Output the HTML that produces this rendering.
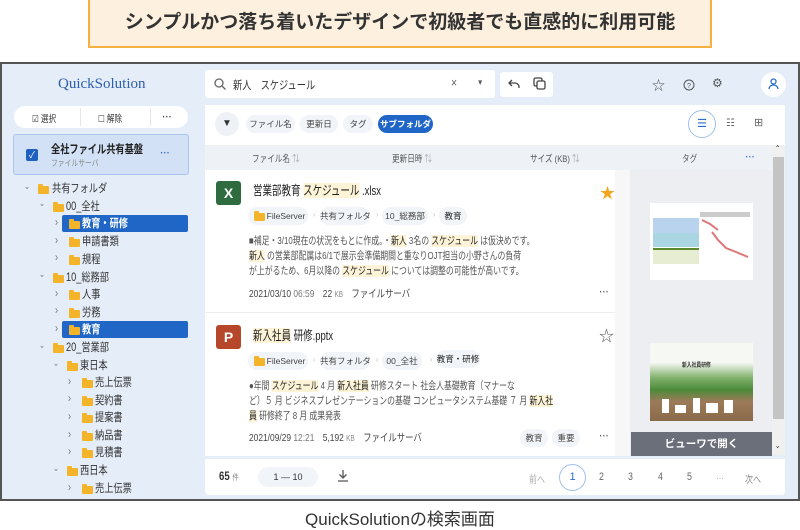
<!DOCTYPE html>
<html><head><meta charset="utf-8"><style>
*{box-sizing:border-box;margin:0;padding:0}
body{width:800px;height:526px;background:#fff;position:relative;overflow:hidden;font-family:"Liberation Sans","Noto Sans CJK JP",sans-serif;color:#333}
.a{position:absolute}
.banner{left:88px;top:0;width:624px;height:48px;background:#fdf0df;border:2px solid #f5b042;border-top:none;text-align:center;font-size:19px;font-weight:bold;line-height:46px;color:#333}
.frame{left:0;top:62px;width:800px;height:439px;border:2px solid #555;background:#e5edf8;overflow:hidden}
.t{position:absolute;white-space:nowrap;transform:scaleX(.8);transform-origin:left center}
.fold{position:absolute;width:11px;height:8px;background:#f4b42a;border-radius:1px}
.fold:before{content:"";position:absolute;left:0;top:-2px;width:5px;height:3px;background:#f4b42a;border-radius:1px 1px 0 0}
.chip{position:absolute;height:18px;border-radius:9px;background:#f1f4f8;font-size:8.5px;line-height:18px;text-align:center;color:#444;white-space:nowrap;overflow:hidden}
.hl{background:#fdf3d6;color:#222}
.snip{position:absolute;font-size:10.5px;line-height:15px;color:#555;white-space:nowrap;transform:scaleX(.75);transform-origin:left center}
.ico{position:absolute;width:25px;height:24px;border-radius:3px;color:#fff;font-weight:bold;font-size:14px;text-align:center;line-height:24px}
.tr{font-size:11.5px;color:#333}
</style></head><body>
<div class="a banner">シンプルかつ落ち着いたデザインで初級者でも直感的に利用可能</div>
<div class="a frame">
<div class="t" style="left:56px;top:12px;font-family:'Liberation Serif',serif;font-size:15px;color:#2d5fae;transform:none">QuickSolution</div>
<div class="a" style="left:12px;top:42px;width:174px;height:22px;background:#fff;border-radius:11px;font-size:9.5px">
 <span class="t" style="left:18px;top:5px">☑ 選択</span><span class="t" style="left:84px;top:5px">☐ 解除</span><span class="t" style="left:148px;top:2px;font-size:12px">⋯</span>
 <div class="a" style="left:66px;top:2px;width:1px;height:18px;background:#e6e6e6"></div><div class="a" style="left:136px;top:2px;width:1px;height:18px;background:#e6e6e6"></div>
</div>
<div class="a" style="left:11px;top:70px;width:176px;height:41px;background:#d2e1f5;border:1px solid #a9c6ea;border-radius:3px">
 <div class="a" style="left:12px;top:14px;width:12px;height:12px;background:#1f5fbf;border-radius:2px;color:#fff;font-size:9px;line-height:12px;text-align:center">✓</div>
 <div class="t" style="left:37px;top:6px;font-size:11.5px;font-weight:bold;color:#222">全社ファイル共有基盤</div>
 <div class="t" style="left:37px;top:22px;font-size:8.5px;color:#888">ファイルサーバ</div>
 <div class="t" style="left:146px;top:9px;font-size:12px;color:#1f5fbf">⋯</div>
</div>
<div class="a" style="left:60px;top:151px;width:126px;height:17px;background:#1f66c6;border-radius:2px"></div>
<div class="a" style="left:60px;top:257px;width:126px;height:17px;background:#1f66c6;border-radius:2px"></div>
<div class="tr">
<span class="t" style="left:22px;top:117px;font-size:9px;color:#777">⌄</span><div class="fold" style="left:36px;top:122px"></div><span class="t" style="left:50px;top:116px">共有フォルダ</span>
<span class="t" style="left:37px;top:134px;font-size:9px;color:#777">⌄</span><div class="fold" style="left:51px;top:140px"></div><span class="t" style="left:64px;top:134px">00_全社</span>
<span class="t" style="left:53px;top:153px;color:#777">›</span><div class="fold" style="left:67px;top:157px"></div><span class="t" style="left:80px;top:151px;color:#fff;font-weight:bold">教育・研修</span>
<span class="t" style="left:53px;top:171px;color:#777">›</span><div class="fold" style="left:67px;top:175px"></div><span class="t" style="left:80px;top:169px">申請書類</span>
<span class="t" style="left:53px;top:188px;color:#777">›</span><div class="fold" style="left:67px;top:193px"></div><span class="t" style="left:80px;top:187px">規程</span>
<span class="t" style="left:37px;top:205px;font-size:9px;color:#777">⌄</span><div class="fold" style="left:51px;top:211px"></div><span class="t" style="left:64px;top:205px">10_総務部</span>
<span class="t" style="left:53px;top:224px;color:#777">›</span><div class="fold" style="left:67px;top:228px"></div><span class="t" style="left:80px;top:222px">人事</span>
<span class="t" style="left:53px;top:241px;color:#777">›</span><div class="fold" style="left:67px;top:246px"></div><span class="t" style="left:80px;top:240px">労務</span>
<span class="t" style="left:53px;top:259px;color:#777">›</span><div class="fold" style="left:67px;top:263px"></div><span class="t" style="left:80px;top:257px;color:#fff;font-weight:bold">教育</span>
<span class="t" style="left:37px;top:276px;font-size:9px;color:#777">⌄</span><div class="fold" style="left:51px;top:281px"></div><span class="t" style="left:64px;top:275px">20_営業部</span>
<span class="t" style="left:51px;top:294px;font-size:9px;color:#777">⌄</span><div class="fold" style="left:65px;top:299px"></div><span class="t" style="left:78px;top:293px">東日本</span>
<span class="t" style="left:66px;top:312px;color:#777">›</span><div class="fold" style="left:80px;top:316px"></div><span class="t" style="left:93px;top:310px">売上伝票</span>
<span class="t" style="left:66px;top:329px;color:#777">›</span><div class="fold" style="left:80px;top:334px"></div><span class="t" style="left:93px;top:328px">契約書</span>
<span class="t" style="left:66px;top:347px;color:#777">›</span><div class="fold" style="left:80px;top:351px"></div><span class="t" style="left:93px;top:345px">提案書</span>
<span class="t" style="left:66px;top:365px;color:#777">›</span><div class="fold" style="left:80px;top:369px"></div><span class="t" style="left:93px;top:363px">納品書</span>
<span class="t" style="left:66px;top:382px;color:#777">›</span><div class="fold" style="left:80px;top:386px"></div><span class="t" style="left:93px;top:380px">見積書</span>
<span class="t" style="left:51px;top:399px;font-size:9px;color:#777">⌄</span><div class="fold" style="left:65px;top:404px"></div><span class="t" style="left:78px;top:398px">西日本</span>
<span class="t" style="left:66px;top:418px;color:#777">›</span><div class="fold" style="left:80px;top:422px"></div><span class="t" style="left:93px;top:416px">売上伝票</span>
</div>

<div class="a" style="left:203px;top:6px;width:290px;height:28px;background:#fff;border-radius:3px">
 <svg class="a" style="left:9px;top:8px" width="12" height="12"><circle cx="5" cy="5" r="4" fill="none" stroke="#666" stroke-width="1.3"/><path d="M8 8l3.5 3.5" stroke="#666" stroke-width="1.3"/></svg>
 <span class="t" style="left:28px;top:7px;font-size:11.5px;color:#333">新人　スケジュール</span>
 <span class="t" style="left:246px;top:5px;font-size:13px;color:#666">×</span>
 <span class="t" style="left:272px;top:8px;font-size:8px;color:#555">▼</span>
</div>
<div class="a" style="left:498px;top:8px;width:53px;height:25px;background:#fff;border-radius:3px">
 <svg class="a" style="left:8px;top:6px" width="13" height="12"><path d="M4 2L1 5l3 3M1 5h6a4 4 0 0 1 4 4v1" fill="none" stroke="#444" stroke-width="1.3"/></svg>
 <svg class="a" style="left:33px;top:5px" width="13" height="13"><rect x="1" y="1" width="8" height="8" rx="1.5" fill="none" stroke="#444" stroke-width="1.3"/><rect x="4" y="4" width="8" height="8" rx="1.5" fill="#fff" stroke="#444" stroke-width="1.3"/></svg>
</div>
<span class="t" style="left:650px;top:11px;font-size:13px;color:#555;transform:none">☆</span>
<svg class="a" style="left:681px;top:15px" width="12" height="12"><circle cx="6" cy="6" r="5" fill="none" stroke="#555"/><text x="6" y="9" font-size="7" text-anchor="middle" fill="#555">?</text></svg>
<span class="t" style="left:710px;top:12px;font-size:12px;color:#555;transform:none">⚙</span>
<div class="a" style="left:759px;top:8px;width:25px;height:25px;border-radius:50%;background:#fff"><svg class="a" style="left:7px;top:6px" width="11" height="12"><circle cx="5.5" cy="3.5" r="2.5" fill="none" stroke="#2a6fd0" stroke-width="1.3"/><path d="M1 11a4.5 4 0 0 1 9 0" fill="none" stroke="#2a6fd0" stroke-width="1.3"/></svg></div>

<div class="a" style="left:203px;top:41px;width:580px;height:40px;background:#fff"></div>
<div class="a" style="left:213px;top:48px;width:24px;height:24px;border-radius:50%;background:#eef2f7;font-size:10px;text-align:center;line-height:24px">▼</div>
<div class="chip" style="left:244px;top:51px;width:49px">ファイル名</div>
<div class="chip" style="left:298px;top:51px;width:38px">更新日</div>
<div class="chip" style="left:341px;top:51px;width:30px">タグ</div>
<div class="chip" style="left:376px;top:51px;width:55px;background:#1f66c6;color:#fff;font-weight:bold">サブフォルダ</div>
<div class="a" style="left:686px;top:46px;width:28px;height:28px;border-radius:50%;border:1px solid #9fc0ea;color:#2a6fd0;font-size:11px;text-align:center;line-height:26px">☰</div>
<span class="t" style="left:724px;top:54px;font-size:10px;color:#666;transform:none">☷</span>
<span class="t" style="left:752px;top:52px;font-size:11px;color:#666;transform:none">⊞</span>

<div class="a" style="left:203px;top:81px;width:568px;height:25px;background:#eef2f7;font-size:9.5px;color:#555">
 <span class="t" style="left:47px;top:6px">ファイル名 <span style="color:#aaa">⇅</span></span>
 <span class="t" style="left:187px;top:6px">更新日時 <span style="color:#aaa">⇅</span></span>
 <span class="t" style="left:325px;top:6px">サイズ (KB) <span style="color:#aaa">⇅</span></span>
 <span class="t" style="left:477px;top:6px">タグ</span>
 <span class="t" style="left:540px;top:3px;color:#2a6fd0;font-size:12px">⋯</span>
</div>
<div class="a" style="left:770px;top:81px;width:13px;height:310px;background:#f0f0f0"><div class="a" style="left:1px;top:12px;width:11px;height:262px;background:#c4c4c4"></div><span class="t" style="left:3px;top:-1px;font-size:8px">⌃</span><span class="t" style="left:3px;top:296px;font-size:8px">⌄</span></div>

<div class="a" style="left:203px;top:106px;width:410px;height:286px;background:#fff"></div>
<div class="a" style="left:203px;top:248px;width:410px;height:1px;background:#eee"></div>
<div class="a" style="left:613px;top:106px;width:157px;height:286px;background:#f7f7f8"></div>
<div class="a" style="left:628px;top:106px;width:142px;height:286px;background:#edeef1"></div>

<div class="ico" style="left:214px;top:117px;background:#2e6c3f">X</div>
<div class="t" style="left:251px;top:116px;font-size:13px;color:#222;transform:scaleX(.73)">営業部教育 <span class="hl">スケジュール</span> .xlsx</div>
<span class="t" style="left:598px;top:118px;font-size:15px;color:#f2a51d;transform:none">★</span>
<div class="chip" style="left:246px;top:143px;width:60px;padding-left:16px">FileServer</div><div class="fold" style="left:252px;top:149px"></div>
<span class="t" style="left:311px;top:146px;font-size:8px;color:#bbb">›</span>
<div class="chip" style="left:318px;top:143px;width:50px">共有フォルダ</div>
<span class="t" style="left:374px;top:146px;font-size:8px;color:#bbb">›</span>
<div class="chip" style="left:380px;top:143px;width:46px">10_総務部</div>
<span class="t" style="left:431px;top:146px;font-size:8px;color:#bbb">›</span>
<div class="chip" style="left:437px;top:143px;width:28px;color:#222">教育</div>
<div class="snip" style="left:247px;top:170px">■補足・3/10現在の状況をもとに作成。・<span class="hl">新人</span> 3名の <span class="hl">スケジュール</span> は仮決めです。</div>
<div class="snip" style="left:247px;top:185px"><span class="hl">新人</span> の営業部配属は6/1で展示会準備期間と重なりOJT担当の小野さんの負荷</div>
<div class="snip" style="left:247px;top:200px">が上がるため、6月以降の <span class="hl">スケジュール</span> については調整の可能性が高いです。</div>
<div class="t" style="left:247px;top:222px;font-size:10.5px;color:#444">2021/03/10 <span style="color:#777">06:59</span>　22 <span style="font-size:8px;color:#888">KB</span>　ファイルサーバ</div>
<span class="t" style="left:597px;top:219px;font-size:12px;color:#555">⋯</span>

<div class="ico" style="left:214px;top:261px;background:#b7472a">P</div>
<div class="t" style="left:251px;top:261px;font-size:13px;color:#222;transform:scaleX(.73)"><span class="hl">新入社員</span> 研修.pptx</div>
<span class="t" style="left:597px;top:261px;font-size:15px;color:#555;transform:none">☆</span>
<div class="chip" style="left:246px;top:288px;width:60px;padding-left:16px">FileServer</div><div class="fold" style="left:252px;top:294px"></div>
<span class="t" style="left:311px;top:291px;font-size:8px;color:#bbb">›</span>
<div class="chip" style="left:318px;top:288px;width:50px">共有フォルダ</div>
<span class="t" style="left:374px;top:291px;font-size:8px;color:#bbb">›</span>
<div class="chip" style="left:380px;top:288px;width:40px">00_全社</div>
<span class="t" style="left:428px;top:291px;font-size:8px;color:#bbb">›</span>
<div class="chip" style="left:434px;top:286px;width:44px;color:#222">教育・研修</div>
<div class="snip" style="left:247px;top:315px">●年間 <span class="hl">スケジュール</span> 4 月 <span class="hl">新入社員</span> 研修スタート 社会人基礎教育（マナーな</div>
<div class="snip" style="left:247px;top:330px">ど）５ 月 ビジネスプレゼンテーションの基礎 コンピュータシステム基礎 ７ 月 <span class="hl">新入社</span></div>
<div class="snip" style="left:247px;top:345px"><span class="hl">員</span> 研修終了 8 月 成果発表</div>
<div class="t" style="left:247px;top:366px;font-size:10.5px;color:#444">2021/09/29 <span style="color:#777">12:21</span>　5,192 <span style="font-size:8px;color:#888">KB</span>　ファイルサーバ</div>
<div class="chip" style="left:518px;top:365px;width:28px">教育</div><div class="chip" style="left:550px;top:365px;width:28px">重要</div>
<span class="t" style="left:597px;top:363px;font-size:12px;color:#555">⋯</span>

<div class="a" style="left:648px;top:139px;width:103px;height:77px;background:#fff">
 <div class="a" style="left:3px;top:15px;width:46px;height:28px;background:#b9d3ee"></div>
 <div class="a" style="left:3px;top:30px;width:46px;height:14px;background:#a9d6e2"></div>
 <div class="a" style="left:3px;top:45px;width:46px;height:2px;background:#5c8a2e"></div>
 <div class="a" style="left:3px;top:47px;width:46px;height:14px;background:#e6edd2"></div>
 <div class="a" style="left:50px;top:9px;width:50px;height:5px;background:#ccc"></div>
 <svg class="a" style="left:50px;top:15px" width="52" height="50"><path d="M2 2l8 4 8 6M12 14l6 8 8 8 10 4 12 5" stroke="#d77" stroke-width="2" fill="none"/></svg>
</div>
<div class="a" style="left:648px;top:279px;width:103px;height:78px;background:linear-gradient(#f6f8f4 0 25%,#7fb06a 45%,#4c8a3a 60%,#9c7a5a 75%,#8a6a4a);overflow:hidden">
 <span class="t" style="left:32px;top:17px;font-size:6px;color:#333;font-weight:bold">新入社員研修</span>
 <div class="a" style="left:12px;top:56px;width:7px;height:14px;background:#fff"></div><div class="a" style="left:25px;top:62px;width:11px;height:8px;background:#fff"></div><div class="a" style="left:43px;top:55px;width:7px;height:15px;background:#fff"></div><div class="a" style="left:56px;top:60px;width:12px;height:10px;background:#fff"></div><div class="a" style="left:74px;top:57px;width:9px;height:13px;background:#fff"></div>
</div>
<div class="a" style="left:629px;top:368px;width:141px;height:24px;background:#6b6f7a;color:#fff;font-size:10.5px;font-weight:bold;text-align:center;line-height:24px">ビューワで開く</div>

<div class="a" style="left:203px;top:395px;width:580px;height:36px;background:#fff;border-radius:0 0 4px 4px"></div>
<span class="t" style="left:217px;top:405px;font-size:12px;font-weight:bold;color:#333">65 <span style="font-size:8px;color:#888;font-weight:normal">件</span></span>
<div class="a" style="left:256px;top:403px;width:60px;height:20px;border-radius:10px;background:#f1f4f8;font-size:9px;text-align:center;line-height:20px">1 — 10</div>
<svg class="a" style="left:334px;top:405px" width="14" height="14"><path d="M7 1v8M3.5 5.5L7 9l3.5-3.5M2 12h10" fill="none" stroke="#555" stroke-width="1.3"/></svg>
<span class="t" style="left:527px;top:407px;font-size:10px;color:#aaa">前へ</span>
<div class="a" style="left:557px;top:400px;width:27px;height:27px;border-radius:50%;border:1px solid #9fc0ea;color:#2a6fd0;font-size:11px;text-align:center;line-height:25px">1</div>
<span class="t" style="left:597px;top:407px;font-size:11px;color:#666">2</span>
<span class="t" style="left:626px;top:407px;font-size:11px;color:#666">3</span>
<span class="t" style="left:656px;top:407px;font-size:11px;color:#666">4</span>
<span class="t" style="left:685px;top:407px;font-size:11px;color:#666">5</span>
<span class="t" style="left:714px;top:407px;font-size:10px;color:#aaa">…</span>
<span class="t" style="left:743px;top:407px;font-size:10px;color:#888">次へ</span>
</div>
<div class="a" style="left:0;width:800px;top:505px;text-align:center;font-size:17px;color:#333">QuickSolutionの検索画面</div>
</body></html>
